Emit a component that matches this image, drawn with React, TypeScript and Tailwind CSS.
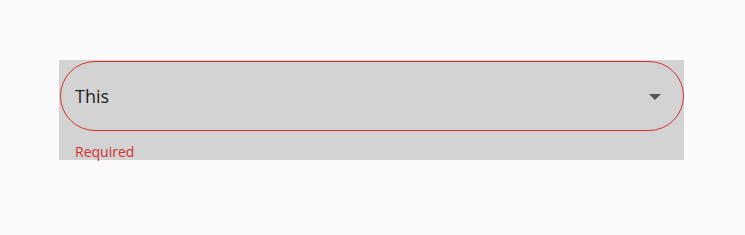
import React from "react";

export default function App() {
  return (
    <div className="w-[745px] h-[235px] bg-[#fafafa] pt-[60px] pl-[59px]" style={{ fontFamily: '"Segoe UI", "Open Sans", "Noto Sans", sans-serif' }}>
      <div className="w-[625px] h-[100px] bg-[#d3d3d3] pt-px">
        <div className="h-[70px] ml-px border border-[#d32f2f] rounded-full flex items-center pl-[14px] pr-[22px]">
          <span className="flex-1 text-[18px] text-[#212121] leading-none">This</span>
          <svg width="12" height="6" viewBox="0 0 12 6" className="mt-px">
            <path d="M0 0 L12 0 L6 6 Z" fill="#555555" />
          </svg>
        </div>
        <div className="pl-[16px] pt-[14px] text-[14px] leading-none text-[#d32f2f]">Required</div>
      </div>
    </div>
  );
}
